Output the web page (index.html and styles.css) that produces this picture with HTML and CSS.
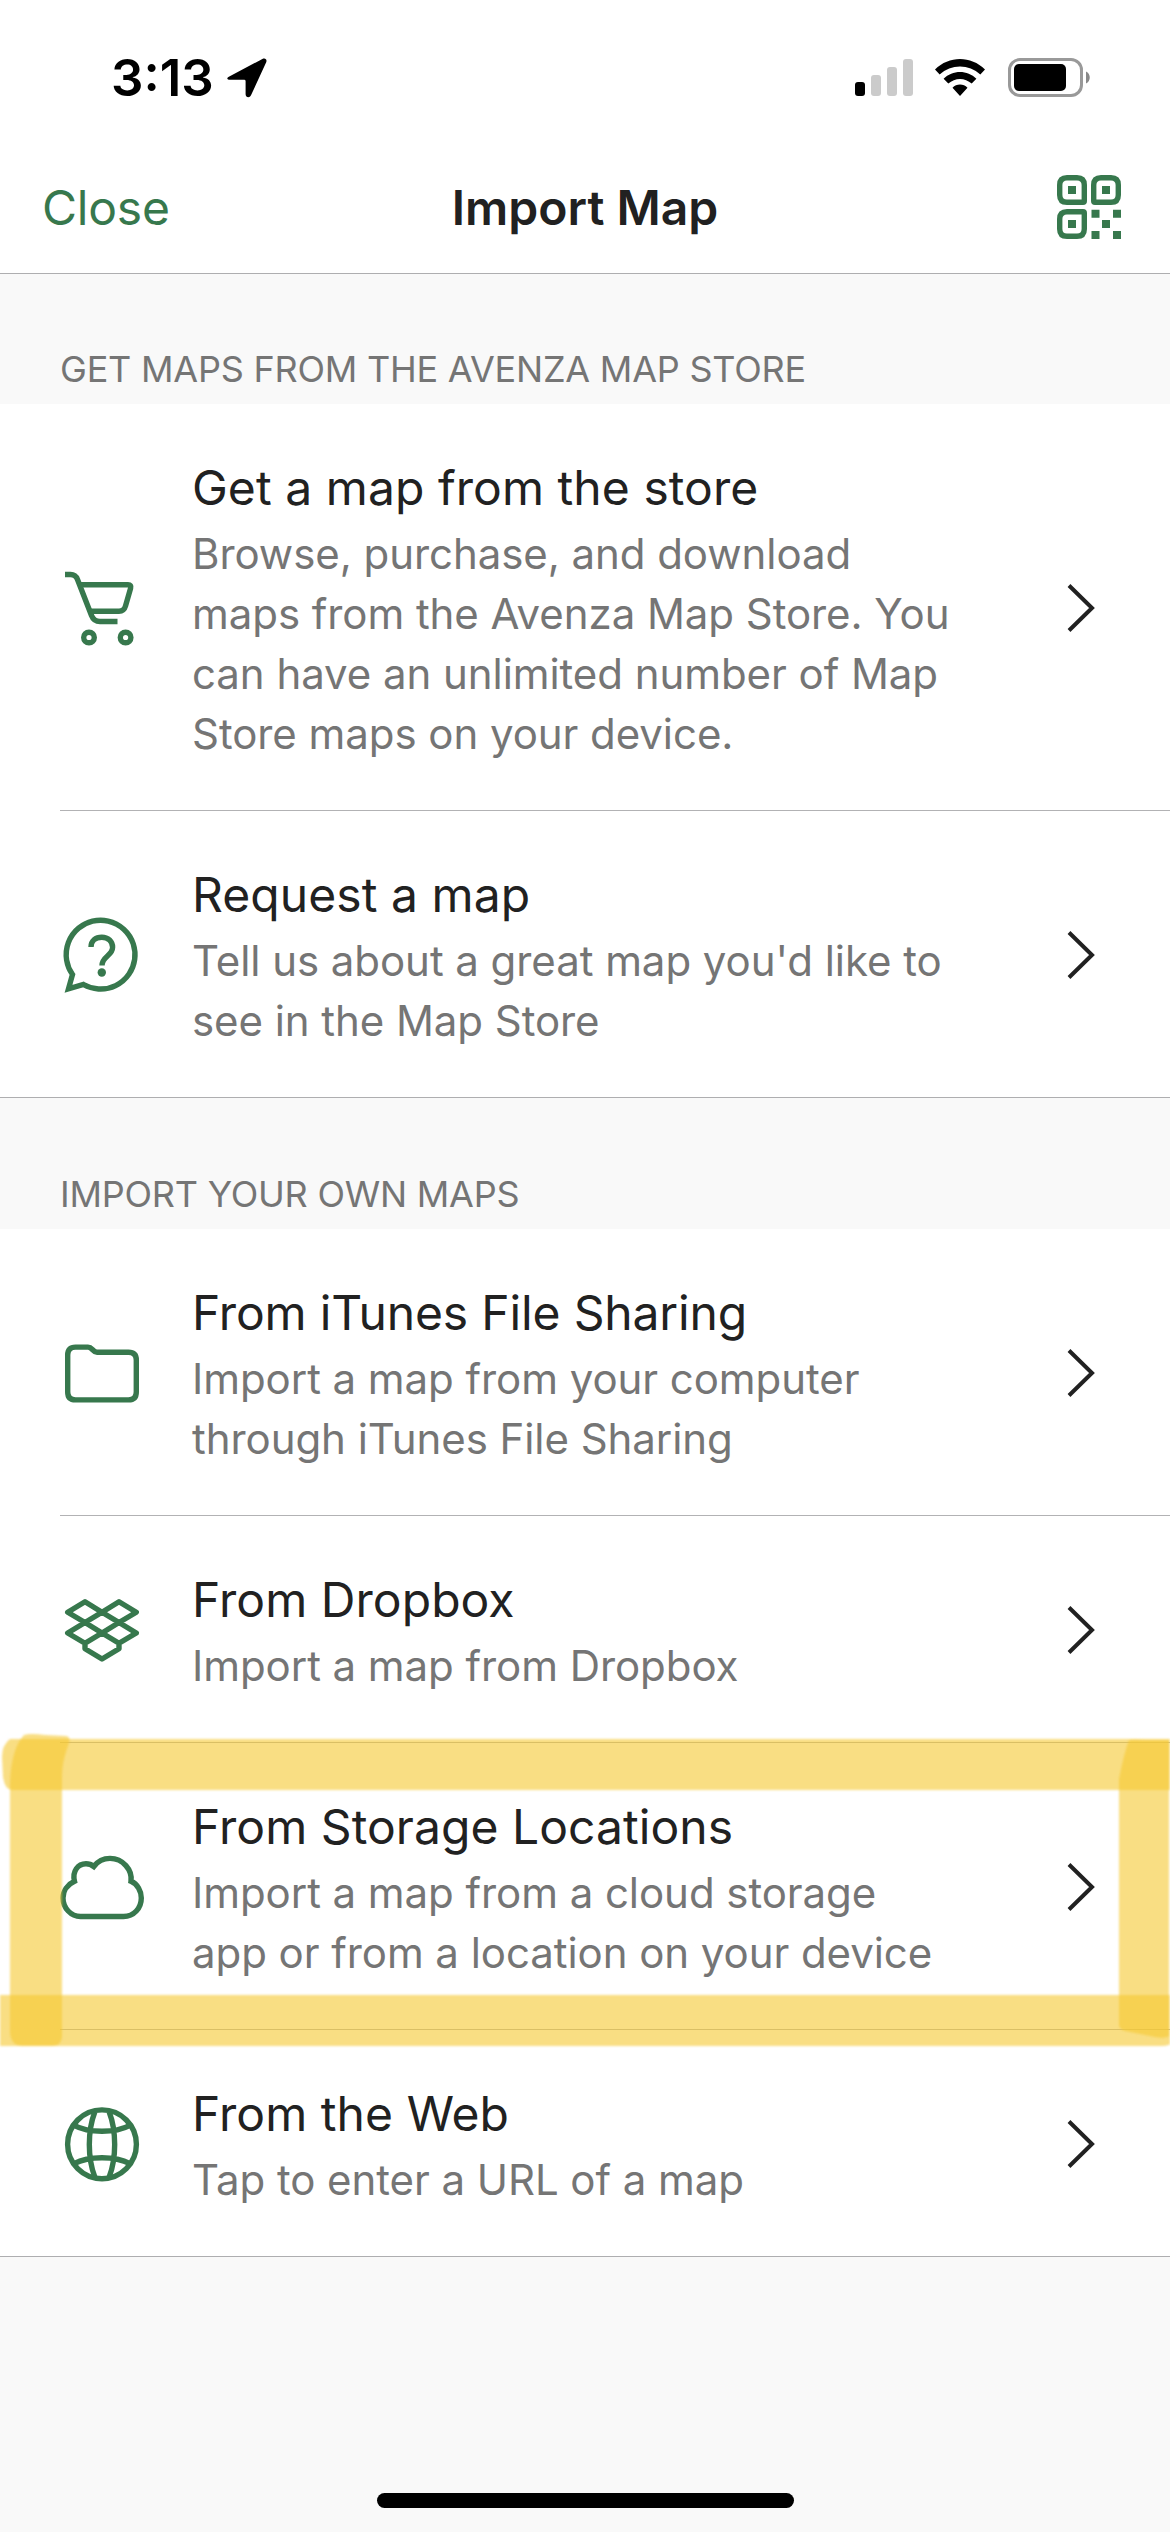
FILE: index.html
```html
<!DOCTYPE html>
<html lang="en">
<head>
<meta charset="utf-8">
<title>Import Map</title>
<link rel="stylesheet" href="styles.css">
</head>
<body>
<div class="screen">
  <header class="top">
    <div class="status">
      <div class="clock">
        <span class="time">3:13</span>
        <svg class="location" viewBox="0 0 40 40"><path d="M2.3 18.6 35.4 .9C38.2 -.5 40.3 1.4 39.2 4.2L24 37.3C22.7 40.2 18.6 39.6 18.6 36.2V23.2Q18.6 21.8 17.2 21.8H3.4C-.2 21.8 -.8 20.1 2.3 18.6Z"/></svg>
      </div>
      <div class="indicators">
        <svg class="signal" viewBox="0 0 58 38"><g class="off"><rect x="16" y="16" width="10" height="21" rx="3"/><rect x="32" y="8" width="10" height="29" rx="3"/><rect x="48" y="0" width="10" height="37" rx="3"/></g><rect x="0" y="23" width="10" height="14" rx="3"/></svg>
        <svg class="wifi" viewBox="0 0 50 38"><path d="M0 10.5C14 -3.5 36 -3.5 50 10.5L45.300 15.500C34 4.700 16 4.700 4.700 15.500ZM8.600 19.700C17.500 10.600 32.500 10.600 41.400 19.700L36.700 24.600C30 18.300 20 18.300 13.300 24.600ZM17.500 28.800C21.500 24.500 28.500 24.500 32.500 28.800L25 37Z"/></svg>
        <svg class="battery" viewBox="0 0 83 40"><rect class="case" x="1.500" y="1.500" width="72" height="36" rx="10.500"/><rect x="6" y="6" width="52" height="27" rx="5"/><path class="cap" d="M78 13.500C83 15.500 83 23.500 78 25.500Z"/></svg>
      </div>
    </div>
    <nav class="nav">
      <a class="close">Close</a>
      <h1 class="title">Import Map</h1>
      <svg class="qr" viewBox="0 0 64 64"><g class="frames"><path d="M10 2.700H20Q27.300 2.700 27.300 10V26Q27.300 27.300 26 27.300H10Q2.700 27.300 2.700 20V10Q2.700 2.700 10 2.700Z"/><path d="M44 2.700H54Q61.300 2.700 61.300 10V20Q61.300 27.300 54 27.300H38Q36.700 27.300 36.700 26V10Q36.700 2.700 44 2.700Z"/><path d="M10 36.700H26Q27.300 36.700 27.300 38V54Q27.300 61.300 20 61.300H10Q2.700 61.300 2.700 54V44Q2.700 36.700 10 36.700Z"/></g><path d="M11 11h8v8h-8zM45 11h8v8h-8zM11 45h8v8h-8zM34.500 34.700h8v8h-8zM56 34.700h8v8h-8zM45 45h8v8h-8zM34.500 56h8v8h-8zM56 56h8v8h-8z"/></svg>
    </nav>
  </header>

  <section class="group">
    <h2 class="heading">GET MAPS FROM THE AVENZA MAP STORE</h2>
    <div class="list">
      <div class="row">
        <svg class="icon" viewBox="0 0 84 84"><path d="M5 8.500H10.500C14 8.500 16.200 10 17.500 13.500L31.500 49.500C33.200 54 35.500 55.500 40 55.500H57.500"/><path d="M19.500 18.800H68C70.500 18.800 71.200 20 70.600 22.200L65.500 40C64.500 43.500 62.500 45.200 59 45.200H30"/><circle cx="29" cy="71.500" r="5.300"/><circle cx="65.600" cy="71.500" r="5.300"/></svg>
        <div class="text"><h3 class="name">Get a map from the store</h3><p class="desc">Browse, purchase, and download<br>maps from the Avenza Map Store. You<br>can have an unlimited number of Map<br>Store maps on your device.</p></div>
        <svg class="chevron" viewBox="0 0 28 48"><path d="M2 1.500 25 24 2 46.500"/></svg>
      </div>
      <div class="row">
        <svg class="icon" viewBox="0 0 84 84"><path d="M12.500 61.500A34.400 34.400 0 1 1 23.500 71.500L8.500 75.900Z"/><path d="M31 34C31 28 35.500 24.200 41.800 24.200S52.600 28.500 52.600 34.300C52.600 43 42 43 42 52.500"/><circle class="dot" cx="41.800" cy="59.500" r="4.200"/></svg>
        <div class="text"><h3 class="name">Request a map</h3><p class="desc">Tell us about a great map you'd like to<br>see in the Map Store</p></div>
        <svg class="chevron" viewBox="0 0 28 48"><path d="M2 1.500 25 24 2 46.500"/></svg>
      </div>
    </div>
  </section>

  <section class="group">
    <h2 class="heading second">IMPORT YOUR OWN MAPS</h2>
    <div class="list">
      <div class="row">
        <svg class="icon" viewBox="0 0 84 84"><path d="M15.500 16.100H28C32.500 16.100 32.500 21.200 37 21.200H68.500Q76.300 21.200 76.300 29V61Q76.300 68.900 68.500 68.900H15.500Q7.700 68.900 7.700 61V24Q7.700 16.100 15.500 16.100Z"/></svg>
        <div class="text"><h3 class="name tight">From iTunes File Sharing</h3><p class="desc">Import a map from your computer<br>through iTunes File Sharing</p></div>
        <svg class="chevron" viewBox="0 0 28 48"><path d="M2 1.500 25 24 2 46.500"/></svg>
      </div>
      <div class="row">
        <svg class="icon round" viewBox="0 0 84 84"><path d="M25 13.800 42 24.200 25 34.500 7.700 24.200ZM59 13.800 76.300 24.200 59 34.500 42 24.200ZM25 34.500 42 45 25 55.300 7.700 45ZM59 34.500 76.300 45 59 55.300 42 45ZM25 55.300V60.800L42 71 59 60.800V55.300"/></svg>
        <div class="text"><h3 class="name">From Dropbox</h3><p class="desc">Import a map from Dropbox</p></div>
        <svg class="chevron" viewBox="0 0 28 48"><path d="M2 1.500 25 24 2 46.500"/></svg>
      </div>
      <div class="row marked">
        <svg class="icon" viewBox="0 0 84 84"><path d="M20.500 71.500C11 71.500 3 63 3 53 3 46 7.500 39.500 14.500 36.300 12 26 18 18.800 26 18.800 29 18.800 31.500 19.700 33.800 21.500 38 16 44 13.400 50 13.400 63 13.400 72.500 25 71 36.300 77.500 39 81.300 46 81.300 53 81.300 63 74 71.500 63.500 71.500Z"/></svg>
        <div class="text"><h3 class="name">From Storage Locations</h3><p class="desc">Import a map from a cloud storage<br>app or from a location on your device</p></div>
        <svg class="chevron" viewBox="0 0 28 48"><path d="M2 1.500 25 24 2 46.500"/></svg>
        <svg class="marker" viewBox="0 0 1170 331"><path d="M10 12H1180V63H12Q5 63 3 50L2 30Q2 18 10 12Z"/><path d="M-10 268H1180V312Q1168 320 1160 319H-10Z"/><path d="M24 8Q30 6 45 8L66 9Q71 10 69 16C65 28 62 35 62 52V310Q61 319 52 319H22Q10 318 10 304V60C10 40 14 18 24 8Z"/><path d="M1129 13Q1132 12 1145 13H1169V309Q1165 312 1155 310L1125 304Q1119 302 1119 298V52Q1124 26 1129 13Z"/></svg>
      </div>
      <div class="row">
        <svg class="icon" viewBox="0 0 84 84"><circle cx="42" cy="42.300" r="34.400"/><path d="M34.800 10C27.500 29 27.500 56 34.800 75M49.200 10C56.500 29 56.500 56 49.200 75M14 23.300C29 31.200 55 31.200 70 23.300M14 61.700C29 53.700 55 53.700 70 61.700"/></svg>
        <div class="text"><h3 class="name">From the Web</h3><p class="desc">Tap to enter a URL of a map</p></div>
        <svg class="chevron" viewBox="0 0 28 48"><path d="M2 1.500 25 24 2 46.500"/></svg>
      </div>
    </div>
  </section>
  <footer class="foot"><div class="home"></div></footer>
</div>
</body>
</html>
```
FILE: styles.css
```css
* { box-sizing: border-box; }
body { margin: 0; background: #f9f9f9; font-family: Inter, "Liberation Sans", sans-serif; color: #212121; }
h1, h2, h3, p { margin: 0; font-weight: 400; }
svg { display: block; flex: none; }
.screen { width: 1170px; height: 2532px; display: flex; flex-direction: column; background: #f9f9f9; overflow: hidden; }

.top { height: 274px; background: #fff; border-bottom: 1px solid #aeaeb0; }
.status { height: 141px; padding: 58px 79px 0 111px; display: flex; justify-content: space-between; align-items: flex-start; color: #000; }
.clock { display: flex; gap: 14px; }
.time { width: 102px; font-size: 51px; line-height: 40px; font-weight: 600; letter-spacing: 0; white-space: nowrap; }
.location { width: 40px; height: 40px; }
.indicators { display: flex; align-items: flex-start; }
.signal { width: 58px; height: 38px; margin: 1px 22px 0 0; }
.off { fill: #cbcbcb; }
.wifi { width: 50px; height: 38px; margin: 1px 23px 0 0; }
.battery { width: 83px; height: 40px; }
.case { fill: none; stroke: #999; stroke-width: 3; }
.cap { fill: #888; }

.nav { height: 132px; padding: 0 49px 0 42px; display: grid; grid-template-columns: 300px 1fr 293px; align-items: center; }
.close { color: #37784d; font-size: 48px; letter-spacing: -.2px; }
.title { font-size: 48px; font-weight: 600; text-align: center; }
.qr { width: 64px; height: 64px; justify-self: end; fill: #37784d; }
.frames { fill: none; stroke: #37784d; stroke-width: 5.400px; }

.heading { height: 130px; padding: 73px 60px 0; font-size: 36px; line-height: 44px; color: #757575; letter-spacing: -.22px; white-space: nowrap; }
.second { height: 131px; padding-top: 74px; }
.list { background: #fff; border-bottom: 1px solid #aeaeb0; }
.row { position: relative; display: flex; align-items: center; padding: 0 75px 0 60px; }
.row + .row { background: linear-gradient(#b2b2b4, #b2b2b4) 60px 0 / 1110px 1px no-repeat; padding-top: 1px; }
.icon { width: 84px; height: 84px; margin-top: 1px; fill: none; stroke: #37784d; stroke-width: 5.400px; }
.round { stroke-linejoin: round; }
.dot { fill: #37784d; stroke: none; }
.text { flex: 1; margin-left: 48px; padding: 54px 0 46px; }
.name { font-size: 48px; line-height: 60px; letter-spacing: .06px; margin-bottom: 6px; }
.tight { letter-spacing: -.15px; }
.desc { font-size: 42px; line-height: 60px; color: #757575; letter-spacing: -.06px; white-space: nowrap; }
.chevron { width: 28px; height: 48px; margin-top: 1px; fill: none; stroke: #212121; stroke-width: 4px; }
.marker { position: absolute; left: 0; top: -15px; width: 1170px; height: 331px; fill: #f5c830; z-index: 1; filter: blur(.8px); }
.marker path { fill-opacity: .6; }

.foot { flex: 1; display: flex; justify-content: center; align-items: flex-end; padding-bottom: 24px; }
.home { width: 417px; height: 15px; border-radius: 8px; background: #000; }
```
